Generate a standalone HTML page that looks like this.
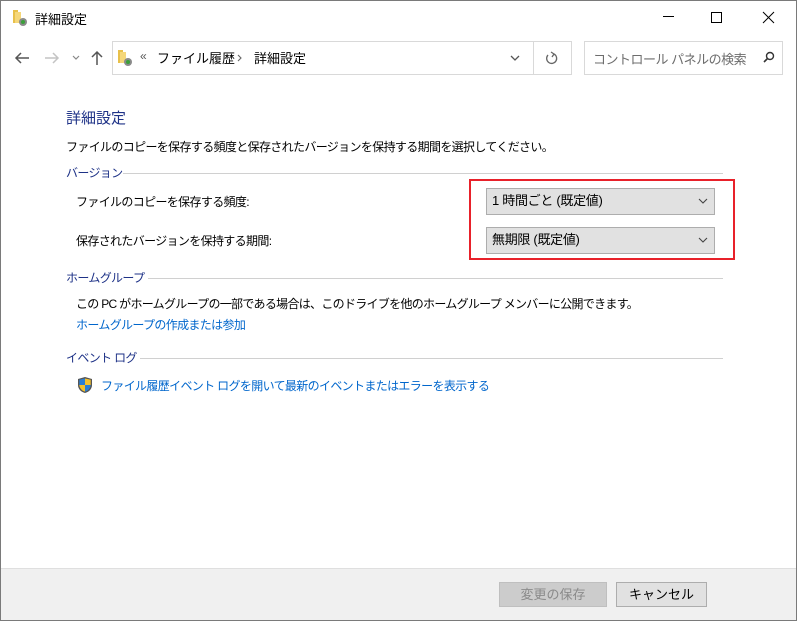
<!DOCTYPE html>
<html><head><meta charset="utf-8"><style>
*{margin:0;padding:0;box-sizing:border-box}
body{width:797px;height:621px;background:#fff;font-family:"Liberation Sans","Noto Sans CJK JP",sans-serif;font-size:12px;color:#000;position:relative;overflow:hidden}
.a{position:absolute;white-space:nowrap}
.t{font-size:12px;letter-spacing:-0.65px}
.win{position:absolute;left:0;top:0;width:797px;height:621px;border:1px solid #7a7a7a}
.sec{color:#1e3287}
.line{position:absolute;height:1px;background:#d0d0d0}
.combo{position:absolute;background:#e1e1e1;border:1px solid #adadad;font-size:13px;padding-left:5px;line-height:24px;letter-spacing:-0.3px}
.link{color:#0066cc}
.btn{position:absolute;border:1px solid #adadad;background:#e1e1e1;text-align:center;font-size:13px;line-height:23px}
</style></head><body>
<div class="win"></div>
<svg class="a" style="left:12px;top:9px" width="18" height="18" viewBox="0 0 18 18"><rect x="1" y="1" width="5" height="13" fill="#e8c04a"/><rect x="3" y="3" width="6" height="11" fill="#f5d77a"/><circle cx="11" cy="13" r="4" fill="#8a8a8a"/><circle cx="11" cy="13" r="2" fill="#3aa03a"/></svg>
<div class="a" style="left:35px;top:9px;font-size:13px">詳細設定</div>
<div class="a" style="left:663px;top:16px;width:11px;height:1px;background:#000"></div>
<div class="a" style="left:711px;top:12px;width:11px;height:11px;border:1px solid #000"></div>
<svg class="a" style="left:762px;top:11px" width="13" height="13"><path d="M1 1L12 12M12 1L1 12" stroke="#000" stroke-width="1"/></svg>
<svg class="a" style="left:14px;top:51px" width="16" height="14"><path d="M2 7H15M7 2L2 7L7 12" stroke="#555" stroke-width="1.5" fill="none"/></svg>
<svg class="a" style="left:44px;top:51px" width="16" height="14"><path d="M1 7H14M9 2L14 7L9 12" stroke="#c4c4c4" stroke-width="1.5" fill="none"/></svg>
<svg class="a" style="left:72px;top:55px" width="8" height="6"><path d="M1 1L4 4L7 1" stroke="#888" stroke-width="1.2" fill="none"/></svg>
<svg class="a" style="left:90px;top:50px" width="14" height="16"><path d="M7 15V2M2 7L7 2L12 7" stroke="#555" stroke-width="1.5" fill="none"/></svg>
<div class="a" style="left:112px;top:41px;width:460px;height:34px;border:1px solid #d9d9d9"></div>
<div class="a" style="left:533px;top:42px;width:1px;height:32px;background:#d9d9d9"></div>
<svg class="a" style="left:117px;top:49px" width="18" height="18" viewBox="0 0 18 18"><rect x="1" y="1" width="5" height="13" fill="#e8c04a"/><rect x="3" y="3" width="6" height="11" fill="#f5d77a"/><circle cx="11" cy="13" r="4" fill="#8a8a8a"/><circle cx="11" cy="13" r="2" fill="#3aa03a"/></svg>
<div class="a" style="left:140px;top:49px;font-size:12px;color:#555">«</div>
<div class="a" style="left:157px;top:48px;font-size:13px">ファイル履歴</div>
<svg class="a" style="left:237px;top:54px" width="6" height="8"><path d="M1 1L4 4L1 7" stroke="#666" stroke-width="1.1" fill="none"/></svg>
<div class="a" style="left:254px;top:48px;font-size:13px">詳細設定</div>
<svg class="a" style="left:510px;top:55px" width="10" height="7"><path d="M1 1L5 5L9 1" stroke="#555" stroke-width="1.3" fill="none"/></svg>
<svg class="a" style="left:545px;top:51px" width="13" height="14"><path d="M3 4A5 5 0 1 0 9 3M6 1L9 3L7 6" stroke="#666" stroke-width="1.3" fill="none"/></svg>
<div class="a" style="left:584px;top:41px;width:199px;height:34px;border:1px solid #d9d9d9"></div>
<div class="a" style="left:593px;top:49px;font-size:13px;color:#6d6d6d;letter-spacing:-0.5px">コントロール パネルの検索</div>
<svg class="a" style="left:763px;top:51px" width="12" height="12"><circle cx="7" cy="5" r="3.5" stroke="#333" stroke-width="1.4" fill="none"/><path d="M4.5 7.5L1 11" stroke="#333" stroke-width="1.6"/></svg>
<div class="a sec" style="left:66px;top:107px;font-size:15px">詳細設定</div>
<div class="a t" style="left:66px;top:138px">ファイルのコピーを保存する頻度と保存されたバージョンを保持する期間を選択してください。</div>
<div class="a sec t" style="left:66px;top:164px">バージョン</div>
<div class="line" style="left:123px;top:173px;width:600px"></div>
<div class="a t" style="left:76px;top:193px">ファイルのコピーを保存する頻度:</div>
<div class="a t" style="left:76px;top:232px">保存されたバージョンを保持する期間:</div>
<div class="combo" style="left:486px;top:188px;width:229px;height:27px">1 時間ごと (既定値)</div>
<div class="combo" style="left:486px;top:227px;width:229px;height:27px">無期限 (既定値)</div>
<svg class="a" style="left:698px;top:198px" width="10" height="7"><path d="M1 1L5 5L9 1" stroke="#444" stroke-width="1.1" fill="none"/></svg>
<svg class="a" style="left:698px;top:237px" width="10" height="7"><path d="M1 1L5 5L9 1" stroke="#444" stroke-width="1.1" fill="none"/></svg>
<div class="a" style="left:469px;top:179px;width:266px;height:81px;border:2px solid #e8212a"></div>
<div class="a sec t" style="left:66px;top:269px">ホームグループ</div>
<div class="line" style="left:148px;top:278px;width:575px"></div>
<div class="a t" style="left:76px;top:295px;letter-spacing:-0.7px">この PC がホームグループの一部である場合は、このドライブを他のホームグループ メンバーに公開できます。</div>
<div class="a link t" style="left:76px;top:316px">ホームグループの作成または参加</div>
<div class="a sec t" style="left:66px;top:349px">イベント ログ</div>
<div class="line" style="left:140px;top:358px;width:583px"></div>
<svg class="a" style="left:77px;top:376px" width="16" height="18" viewBox="0 0 16 18"><path d="M8 1L15 3V9C15 13 12 16 8 17C4 16 1 13 1 9V3Z" fill="#555"/><path d="M8 2.5V9H2.3V3.8Z" fill="#2a7fd4"/><path d="M8 2.5L13.7 3.8V9H8Z" fill="#f5c22b"/><path d="M2.3 9H8V15.6C5 14.8 2.6 12.5 2.3 9Z" fill="#f5c22b"/><path d="M8 9H13.7C13.4 12.5 11 14.8 8 15.6Z" fill="#2a7fd4"/></svg>
<div class="a link t" style="left:101px;top:377px;letter-spacing:-0.65px">ファイル履歴イベント ログを開いて最新のイベントまたはエラーを表示する</div>
<div class="a" style="left:1px;top:568px;width:795px;height:52px;background:#f0f0f0;border-top:1px solid #dfdfdf"></div>
<div class="btn" style="left:499px;top:582px;width:108px;height:25px;background:#cccccc;border-color:#bfbfbf;color:#8a8a8a">変更の保存</div>
<div class="btn" style="left:616px;top:582px;width:91px;height:25px;color:#000">キャンセル</div>
</body></html>
